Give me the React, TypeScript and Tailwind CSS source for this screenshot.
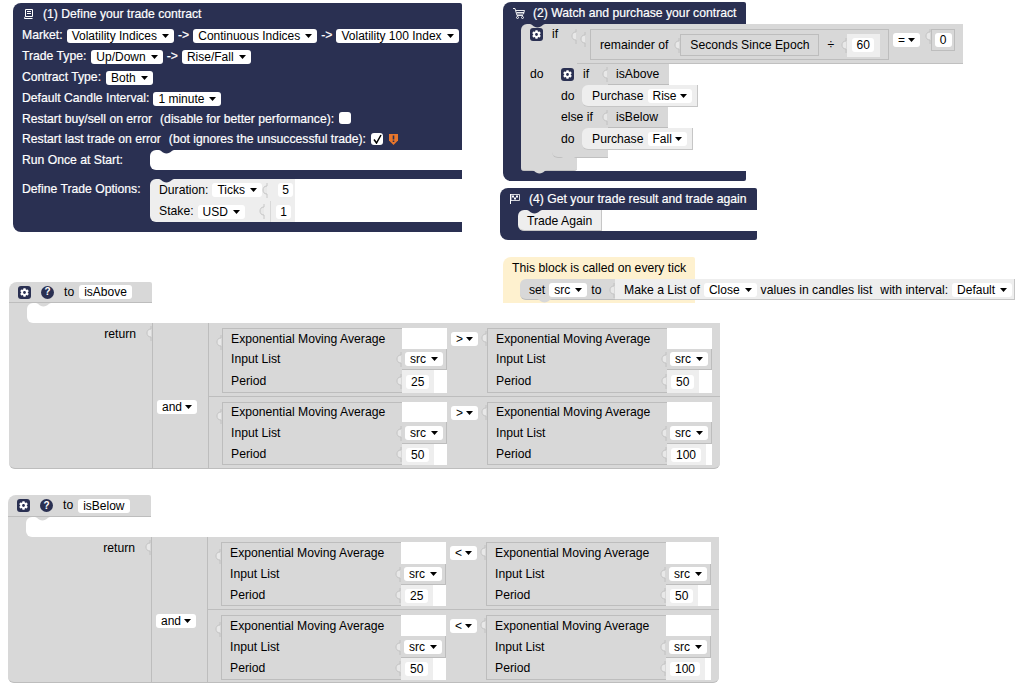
import type { ReactNode } from "react";
import { FaCog } from "react-icons/fa";

const NAVY = "#2a3052";

function Caret() {
  return (
    <svg width="7" height="4" viewBox="0 0 7 4" className="shrink-0">
      <path d="M0 0h7L3.5 4z" fill="#000" />
    </svg>
  );
}

function Drop({ label, narrow, className = "" }: { label: string; narrow?: boolean; className?: string }) {
  return (
    <span
      className={`inline-flex h-[14px] shrink-0 items-center rounded-[3px] bg-white px-[5px] text-[12px] leading-none whitespace-nowrap text-black [-webkit-text-stroke:0] ${narrow ? "gap-[3px]" : "gap-[5px]"} ${className}`}
    >
      {label}
      <Caret />
    </span>
  );
}

function Pill({ label, className = "" }: { label: string; className?: string }) {
  return (
    <span className={`inline-flex h-[14px] shrink-0 items-center justify-center rounded-[3px] bg-white px-[5px] text-[12px] leading-none whitespace-nowrap text-black ${className}`}>
      {label}
    </span>
  );
}

// input socket drawn on the left edge of a value slot
function Socket({ className = "" }: { className?: string }) {
  return (
    <svg width="6" height="15" viewBox="0 0 6 15" className={`shrink-0 ${className}`}>
      <path d="M5 0v3C2 3 1 5 1 7s1 4 4 4v4" fill="#e8e8e8" stroke="#bdbdbd" strokeWidth="0.8" />
    </svg>
  );
}

// the bump of a statement connector
function Notch({ fill, className = "" }: { fill: string; className?: string }) {
  return (
    <svg width="15" height="4" viewBox="0 0 15 4" className={`absolute ${className}`}>
      <path d="M0 0c2 0 3 3 7.500 3.500C12 3 13 0 15 0z" fill={fill} />
    </svg>
  );
}

function GearBox() {
  return (
    <span className="inline-flex h-[13px] w-[13px] shrink-0 items-center justify-center rounded-[3px] bg-[#2a3052] text-white">
      <FaCog size={9} />
    </span>
  );
}

function HelpDot() {
  return (
    <span className="inline-flex h-[13px] w-[13px] shrink-0 items-center justify-center rounded-full bg-[#2a3052] text-[10px] leading-none font-bold text-white">
      ?
    </span>
  );
}

function Check({ checked }: { checked?: boolean }) {
  return (
    <span className="inline-flex h-[12px] w-[12px] shrink-0 items-center justify-center rounded-[3px] bg-white">
      {checked && (
        <svg width="9" height="10" viewBox="0 0 9 10">
          <path d="M1 5.500 3.500 9 8 1" fill="none" stroke="#000" strokeWidth="1.500" />
        </svg>
      )}
    </span>
  );
}

function Row({ children, className = "h-[21px]" }: { children: ReactNode; className?: string }) {
  return <div className={`flex items-center whitespace-nowrap text-white [-webkit-text-stroke:0.2px_#fff] ${className}`}>{children}</div>;
}

function TradeContract() {
  return (
    <div className="absolute top-[3px] left-[13px] flex h-[229px] w-[449px] flex-col rounded-l-lg rounded-tr-[2px] bg-[#2a3052]">
      <Row className="h-[22px] pl-[10px]">
        <svg width="11" height="10" viewBox="0 0 11 10" fill="none" stroke="#fff" strokeWidth="1">
          <path d="M1.500 9.500h8M2.500.5h7v7h-7zM4 2.500h4M4 4.500h4M1.500 9.500c0-1 .5-2 1-2" />
        </svg>
        <span className="ml-[9px]">(1) Define your trade contract</span>
      </Row>
      <div className="flex flex-col pl-[9px]">
        <Row>
          Market:
          <Drop label="Volatility Indices" className="ml-[4px]" />
          <span className="mx-[4px]">-&gt;</span>
          <Drop label="Continuous Indices" />
          <span className="mx-[4px]">-&gt;</span>
          <Drop label="Volatility 100 Index" />
        </Row>
        <Row>
          Trade Type:
          <Drop label="Up/Down" className="ml-[5px]" />
          <span className="mx-[4px]">-&gt;</span>
          <Drop label="Rise/Fall" />
        </Row>
        <Row>
          Contract Type:
          <Drop label="Both" className="ml-[5px]" />
        </Row>
        <Row>
          Default Candle Interval:
          <Drop label="1 minute" className="ml-[4px]" />
        </Row>
        <Row className="h-[20px]">
          Restart buy/sell on error
          <span className="ml-[8px]">(disable for better performance):</span>
          <span className="ml-[5px]">
            <Check />
          </span>
        </Row>
        <Row>
          Restart last trade on error
          <span className="ml-[8px]">(bot ignores the unsuccessful trade):</span>
          <span className="ml-[5px]">
            <Check checked />
          </span>
          <svg width="9" height="11" viewBox="0 0 9 11" className="ml-[6px]">
            <path d="M0 0h9v6.500L4.500 11 0 6.500z" fill="#e8762c" />
            <path d="M3.700 1.500h1.600v4H3.700zM3.700 6.500h1.600V8H3.700z" fill="#2a3052" />
          </svg>
        </Row>
      </div>
      <Row className="h-[20px] pl-[9px]">
        <span className="w-[128px]">Run Once at Start:</span>
        <div className="relative h-full flex-1 rounded-l-[6px] bg-white">
          <Notch fill={NAVY} className="top-0 left-[9px]" />
        </div>
      </Row>
      <div className="mt-[9px] flex h-[43px] pl-[9px] text-white">
        <span className="w-[128px] pt-[4px] [-webkit-text-stroke:0.2px_#fff]">Define Trade Options:</span>
        <div className="flex flex-1 bg-[linear-gradient(to_right,#2a3052_8px,#fff_8px)]">
          <div className="relative flex h-full w-[145px] flex-col rounded-l-[6px] bg-[#eeeeee] text-black">
            <Notch fill={NAVY} className="top-0 left-[9px]" />
            <div className="flex h-[22px] items-center pl-[9px]">
              <span>Duration:</span>
              <Drop label="Ticks" className="ml-[4px]" />
              <div className="flex-1" />
              <Socket />
              <span className="ml-[5px] h-full w-px bg-[#d8d8d8]" />
              <Pill label="5" className="mr-[4px] ml-[5px] w-[15px]" />
            </div>
            <div className="flex h-[21px] items-center pl-[9px]">
              <span>Stake:</span>
              <Drop label="USD" className="ml-[4px]" />
              <div className="flex-1" />
              <Socket />
              <span className="ml-[5px] h-full w-px bg-[#d8d8d8]" />
              <Pill label="1" className="mr-[4px] ml-[5px] w-[15px]" />
            </div>
          </div>
        </div>
      </div>
    </div>
  );
}

function Purchase({ value }: { value: string }) {
  return (
    <div className="flex h-[22px] shrink-0 items-center gap-[4px] rounded-l-[6px] border-r border-b border-[#c6c6c6] bg-[#eeeeee] pt-px pr-[5px] pl-[10px] text-black">
      Purchase
      <Drop label={value} narrow />
    </div>
  );
}

function ValueBlock({ label, className = "" }: { label: string; className?: string }) {
  return <div className={`flex h-[21px] shrink-0 items-center border-b border-[#bdbdbd] bg-[#d8d8d8] pt-px pl-[8px] text-black ${className}`}>{label}</div>;
}

function NestedIf() {
  return (
    <div className="relative flex w-max shrink-0 flex-col text-black">
      <div className="flex">
        <div className="flex h-[21px] w-[56px] shrink-0 items-center rounded-tl-[6px] bg-[#d8d8d8] pl-[9px]">
          <GearBox />
          <span className="ml-[9px]">if</span>
          <Socket className="ml-auto" />
        </div>
        <ValueBlock label="isAbove" className="w-[61px]" />
      </div>
      <div className="flex bg-[linear-gradient(to_right,#d8d8d8_38px,transparent_38px)]">
        <div className="flex h-[22px] w-[30px] shrink-0 items-center pl-[9px]">do</div>
        <Purchase value="Rise" />
      </div>
      <div className="flex">
        <div className="flex h-[21px] w-[56px] shrink-0 items-center bg-[#d8d8d8] pl-[9px]">
          else if
          <Socket className="ml-auto" />
        </div>
        <ValueBlock label="isBelow" className="w-[60px]" />
      </div>
      <div className="flex bg-[linear-gradient(to_right,#d8d8d8_38px,transparent_38px)]">
        <div className="flex h-[22px] w-[30px] shrink-0 items-center pl-[9px]">do</div>
        <Purchase value="Fall" />
      </div>
      <div className="relative h-[8px] w-[56px] rounded-bl-[6px] border-b border-[#c0c0c0] bg-[#d8d8d8]">
        <Notch fill="#d8d8d8" className="top-full left-[9px]" />
      </div>
    </div>
  );
}

function WatchPurchase() {
  return (
    <div className="absolute top-[2px] left-[503px] flex h-[179px] w-[243px] flex-col">
      <Row className="h-[22px] rounded-tl-lg rounded-tr-[2px] bg-[#2a3052] pl-[10px]">
        <svg width="12" height="11" viewBox="0 0 12 11" fill="none" stroke="#fff" strokeWidth="0.9">
          <path d="M0 .5h2l2 7h6M3 2.500h8.500M3.500 4.500h7.500M4 6h6.500L11.500 2.500" />
          <circle cx="4.500" cy="9.500" r="1" />
          <circle cx="9.500" cy="9.500" r="1" />
        </svg>
        <span className="ml-[8px]">(2) Watch and purchase your contract</span>
      </Row>
      <div className="flex h-[147px]">
        <div className="w-[18px] shrink-0 bg-[#2a3052]" />
        <div className="flex w-max shrink-0 flex-col bg-[linear-gradient(to_right,#2a3052_8px,transparent_8px)] text-black">
          <div className="flex h-[40px]">
            <div className="relative flex h-full w-[56px] shrink-0 rounded-tl-[6px] bg-[#d8d8d8] pt-[4px] pl-[9px]">
              <Notch fill={NAVY} className="top-0 left-[9px]" />
              <GearBox />
              <span className="ml-[9px] leading-[13px]">if</span>
              <Socket className="mt-[1px] ml-auto" />
            </div>
            <div className="flex h-full w-[386px] shrink-0 items-start border-b border-[#c0c0c0] bg-[#d8d8d8] pt-[5px] pl-[3px]">
              <Socket className="mt-[3px]" />
              <div className="ml-[4px] flex h-[31px] w-[299px] shrink-0 items-center border border-[#bdbdbd] bg-[#d8d8d8] pt-px pl-[9px]">
                remainder of
                <Socket className="ml-[6px]" />
                <div className="flex h-[22px] w-[139px] shrink-0 items-center justify-center border border-[#bdbdbd]">Seconds Since Epoch</div>
                <span className="ml-[8px]">÷</span>
                <Socket className="ml-[7px]" />
                <div className="flex h-[23px] w-[33px] shrink-0 items-center bg-[#eeeeee] pl-[5px]">
                  <Pill label="60" className="w-[22px]" />
                </div>
              </div>
              <Drop label="=" narrow className="mt-[4px] ml-[4px]" />
              <Socket className="ml-[5px]" />
              <div className="flex h-[22px] w-[24px] shrink-0 items-center justify-center border border-[#bdbdbd]">
                <Pill label="0" className="w-[17px]" />
              </div>
            </div>
          </div>
          <div className="relative flex h-[107px] w-[56px] items-start rounded-b-[3px] border-b border-[#c0c0c0] bg-[#d8d8d8] pl-[9px]">
            <span className="mt-[4px] w-[22px] shrink-0">do</span>
            <NestedIf />
            <Notch fill="#d8d8d8" className="top-full left-[11px]" />
          </div>
        </div>
      </div>
      <div className="h-[10px] rounded-bl-lg rounded-br-[2px] bg-[#2a3052]" />
    </div>
  );
}

function TradeAgain() {
  return (
    <div className="absolute top-[188px] left-[500px] flex h-[52px] w-[257px] flex-col">
      <Row className="h-[22px] rounded-tl-lg rounded-tr-[2px] bg-[#2a3052] pl-[10px]">
        <svg width="10" height="10" viewBox="0 0 10 10">
          <path d="M.5 0v10" stroke="#fff" />
          <path d="M1 .5h8.500v6H1z" fill="#2a3052" stroke="#fff" strokeWidth="0.8" />
          <path d="M2 1.500h2v2H2zM6 1.500h2v2H6zM4 3.500h2v2H4z" fill="#fff" />
        </svg>
        <span className="ml-[9px]">(4) Get your trade result and trade again</span>
      </Row>
      <div className="flex h-[21px] bg-[linear-gradient(to_right,#2a3052_26px,transparent_26px)]">
        <div className="w-[18px] shrink-0" />
        <div className="relative flex w-[84px] items-center rounded-l-[6px] border-r border-b border-[#c6c6c6] bg-[#eeeeee] pt-[2px] pl-[9px] text-black">
          <Notch fill={NAVY} className="top-0 left-[9px]" />
          Trade Again
        </div>
      </div>
      <div className="h-[9px] rounded-bl-lg rounded-br-[2px] bg-[#2a3052]" />
    </div>
  );
}

function TickBlock() {
  return (
    <div className="absolute top-[257px] left-[503px] h-[55px] w-[192px] rounded-l-lg rounded-tr-[2px] border-b border-[#e8dcb8] bg-[#fef1cf] text-black">
      <div className="flex h-[22px] items-center pl-[9px] whitespace-nowrap">This block is called on every tick</div>
      <div className="ml-[17px] flex h-[21px] w-max items-center">
        <div className="relative flex h-full w-[95px] shrink-0 items-center rounded-l-[6px] border-b border-[#bdbdbd] bg-[#d8d8d8] pt-[2px] pl-[9px]">
          <Notch fill="#d8d8d8" className="top-full left-[17px]" />
          set
          <Drop label="src" className="ml-[4px]" />
          <span className="ml-[4px]">to</span>
          <Socket className="ml-auto" />
        </div>
        <div className="flex h-full w-[400px] shrink-0 items-center border-r border-b border-[#c6c6c6] bg-[#eeeeee] pt-[2px] pl-[9px]">
          Make a List of
          <Drop label="Close" className="ml-[4px]" />
          <span className="ml-[4px]">values in candles list</span>
          <span className="ml-[8px]">with interval:</span>
          <Drop label="Default" className="ml-[4px]" />
        </div>
      </div>
    </div>
  );
}

function Ema({ period, rows }: { period: string; rows: number[] }) {
  return (
    <div className="flex w-[225px] shrink-0 flex-col text-black">
      <div className="flex" style={{ height: rows[0] }}>
        <div className="flex w-[180px] items-center border-t border-l border-[#bdbdbd] pl-[8px]">Exponential Moving Average</div>
        <div className="w-[45px] bg-white" />
      </div>
      <div className="flex" style={{ height: rows[1] }}>
        <div className="flex w-[180px] items-center border-l border-[#bdbdbd] pl-[8px]">
          Input List
          <Socket className="ml-auto" />
        </div>
        <div className="flex w-[45px] items-center justify-center border-r border-b border-[#bdbdbd]">
          <Drop label="src" />
        </div>
      </div>
      <div className="flex" style={{ height: rows[2] }}>
        <div className="flex w-[180px] items-center border-b border-l border-[#bdbdbd] pl-[8px]">
          Period
          <Socket className="ml-auto" />
        </div>
        <div className="flex w-[45px] bg-white">
          <div className="flex items-center bg-[#eeeeee] pr-[5px] pl-[4px]">
            <Pill label={period} className="min-w-[22px]" />
          </div>
        </div>
      </div>
    </div>
  );
}

function Compare({ op, left, right, rows, className = "" }: { op: string; left: string; right: string; rows: number[]; className?: string }) {
  return (
    <div className={`flex items-start pl-[7px] ${className}`}>
      <Socket className="mt-[7px]" />
      <Ema period={left} rows={rows} />
      <Drop label={op} narrow className="mt-[4px] ml-[4px]" />
      <Socket className="mt-[3px] ml-[3px]" />
      <Ema period={right} rows={rows} />
    </div>
  );
}

function FunctionBlock({
  name,
  op,
  className,
  headHeight,
  gap,
  rows,
}: {
  name: string;
  op: string;
  className: string;
  headHeight: string;
  gap: string;
  rows: number[][];
}) {
  return (
    <div className={`absolute left-0 flex w-[711px] flex-col text-black ${className}`}>
      <div className={`flex w-[143px] items-center rounded-tl-lg rounded-tr-[2px] border-b border-[#bdbdbd] bg-[#d8d8d8] pl-[9px] ${headHeight}`}>
        <GearBox />
        <span className="ml-[10px]">
          <HelpDot />
        </span>
        <span className="ml-[10px]">to</span>
        <Pill label={name} className="ml-[5px]" />
      </div>
      <div className="flex h-[20px] bg-[linear-gradient(to_right,#d8d8d8_26px,transparent_26px)] pl-[18px]">
        <div className="relative flex-1 rounded-l-[6px] bg-white">
          <Notch fill="#d8d8d8" className="top-0 left-[9px]" />
        </div>
      </div>
      <div className="flex flex-1 rounded-b-[6px] border-b border-[#bdbdbd] bg-[#d8d8d8]">
        <div className="flex w-[143px] items-start justify-end pt-[5px]">
          <span className="mr-[10px]">return</span>
          <Socket className="-mt-[2px]" />
        </div>
        <div className="flex w-[56px] flex-col border-l border-[#bdbdbd]">
          <div className="flex-1" />
          <div className="flex h-[70px] items-start pt-[2px] pl-[4px]">
            <Drop label="and" narrow />
          </div>
        </div>
        <div className="flex flex-1 flex-col border-l border-[#bdbdbd]">
          <Compare op={op} left="25" right="50" rows={rows[0]} className="mt-[5px]" />
          <div className="mt-[3px] h-px bg-[#bdbdbd]" />
          <Compare op={op} left="50" right="100" rows={rows[1]} className={gap} />
        </div>
      </div>
    </div>
  );
}

export default function App() {
  return (
    <div className="relative h-[693px] w-[1032px] overflow-hidden bg-white text-[12.2px] leading-none [font-family:'Liberation_Sans',Arial,sans-serif]">
      <TradeContract />
      <WatchPurchase />
      <TradeAgain />
      <TickBlock />
      <div className="absolute top-0 left-[9px] h-full w-[711px]">
        <FunctionBlock name="isAbove" op="&gt;" className="top-[282px] h-[187px]" headHeight="h-[21px]" gap="mt-[5px]" rows={[[21, 21, 23], [20, 22, 21]]} />
      </div>
      <div className="absolute top-0 left-[8px] h-full w-[711px]">
        <FunctionBlock name="isBelow" op="&lt;" className="top-[495px] h-[188px]" headHeight="h-[22px]" gap="mt-[5px]" rows={[[22, 21, 21], [21, 22, 22]]} />
      </div>
    </div>
  );
}
